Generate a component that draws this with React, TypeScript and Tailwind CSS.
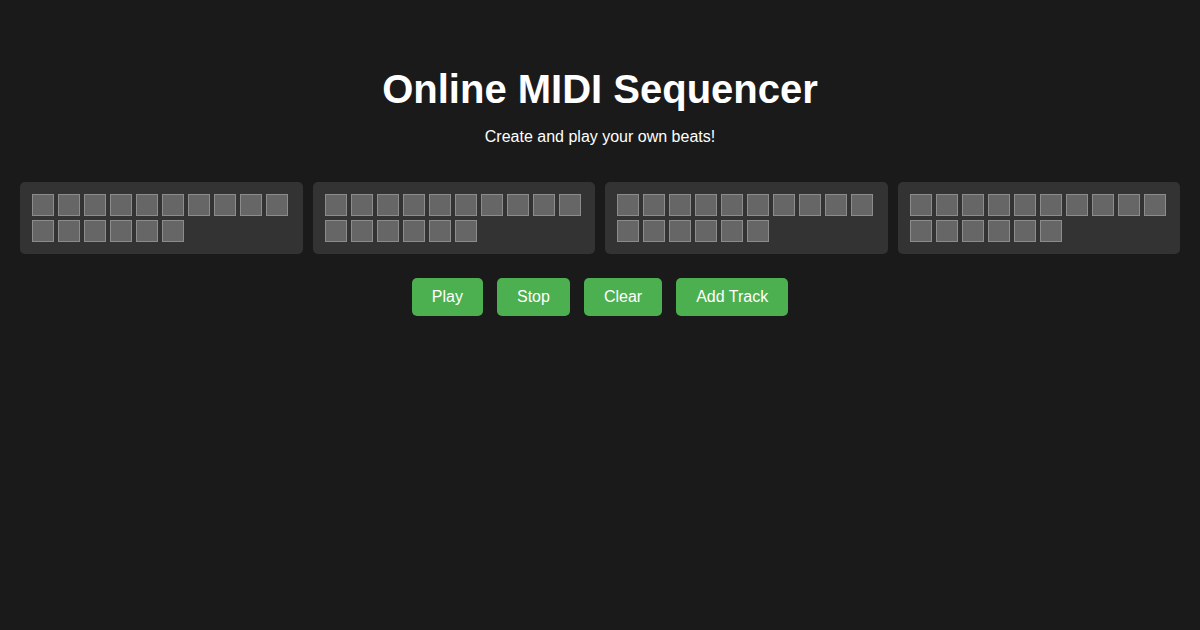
import React from 'react';

const tracks = [0, 1, 2, 3];
const steps = Array.from({ length: 16 }, (_, i) => i);

function Track() {
  return (
    <div className="flex-1 flex flex-wrap content-start bg-[#333333] rounded-[5px] p-[10px]">
      {steps.map((s) => (
        <div
          key={s}
          className="w-[22px] h-[22px] m-[2px] bg-[#666666] border border-[#8c8c8c]"
        />
      ))}
    </div>
  );
}

export default function App() {
  const buttons = ['Play', 'Stop', 'Clear', 'Add Track'];
  return (
    <div
      className="min-h-screen bg-[#1a1a1a] text-white flex flex-col items-center"
      style={{ fontFamily: '"Liberation Sans", Arial, sans-serif' }}
    >
      <h1 className="pt-[66px] text-[40px] leading-[46px] font-bold">Online MIDI Sequencer</h1>
      <p className="mt-[16px] text-[16px] leading-[18px]">Create and play your own beats!</p>

      {/* Tracks */}
      <div className="mt-[36px] w-full px-[20px] flex gap-[10px]">
        {tracks.map((t) => (
          <Track key={t} />
        ))}
      </div>

      {/* Controls */}
      <div className="mt-[24px] flex gap-[14px]">
        {buttons.map((b) => (
          <button
            key={b}
            className="bg-[#4caf50] text-white text-[16px] leading-[18px] px-[20px] py-[10px] rounded-[5px]"
          >
            {b}
          </button>
        ))}
      </div>
    </div>
  );
}
